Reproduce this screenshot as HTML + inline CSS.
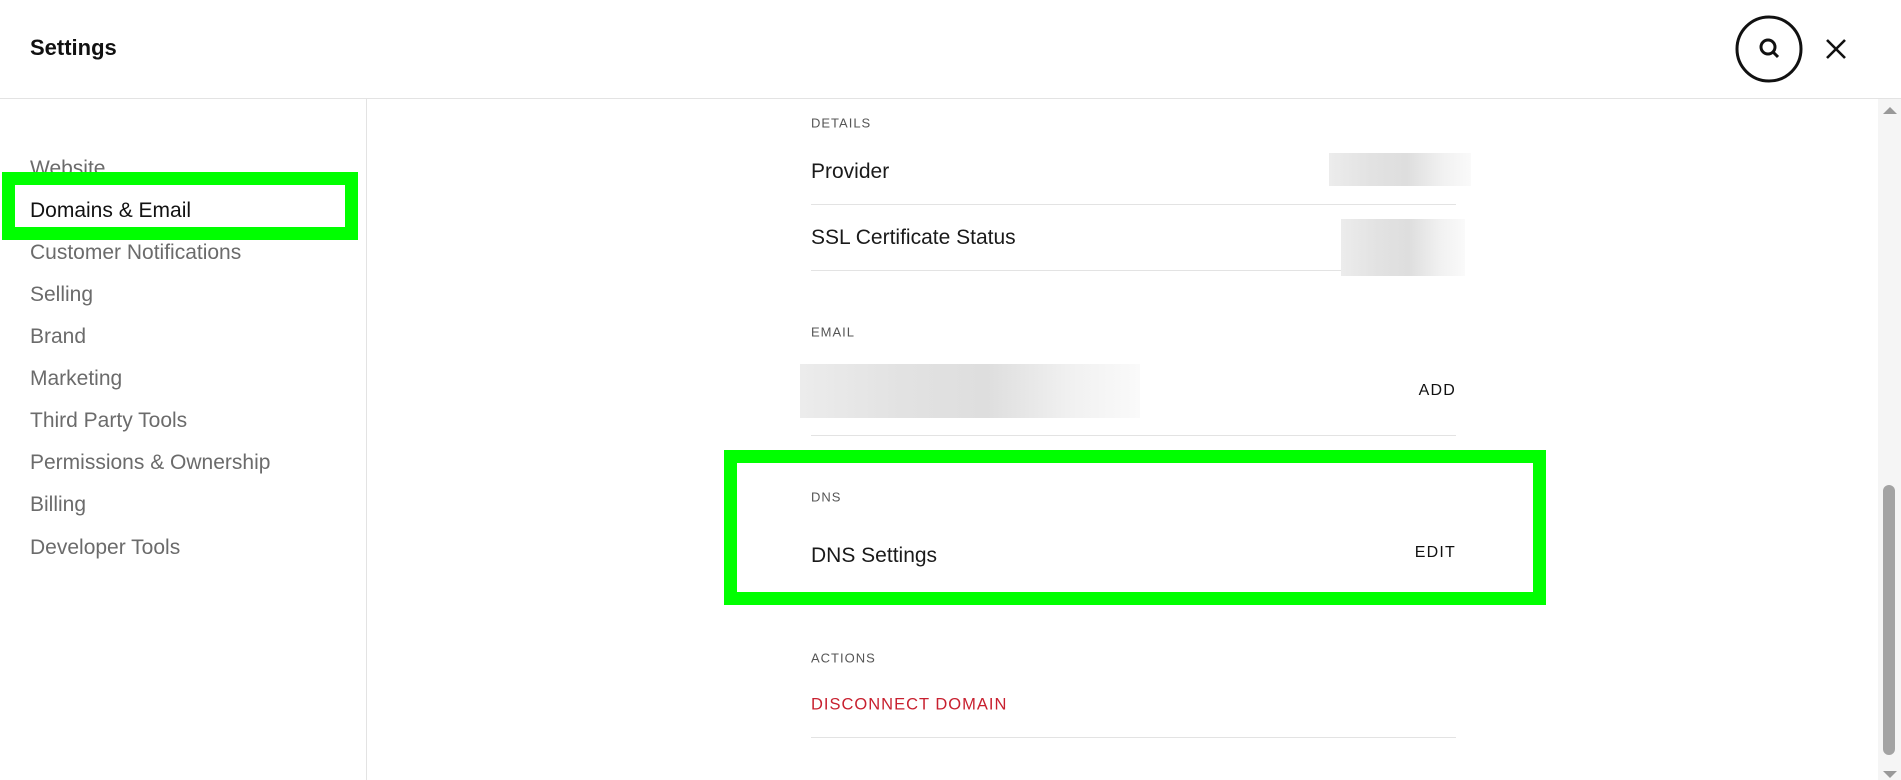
<!DOCTYPE html>
<html><head><meta charset="utf-8"><style>
*{margin:0;padding:0;box-sizing:border-box}
body{width:1901px;height:780px;overflow:hidden;background:#fff;font-family:"Liberation Sans",sans-serif;position:relative;color:#111}
.a{position:absolute;white-space:nowrap}
.nav{left:30px;font-size:21px;color:#6b6b6b;transform:translateY(-50%)}
.lbl{left:811px;font-size:13px;color:#555;letter-spacing:1px;transform:translateY(-50%)}
.row{left:811px;font-size:21px;color:#1a1a1a;transform:translateY(-50%)}
.btn{right:445px;font-size:16px;letter-spacing:1.2px;color:#111;transform:translateY(-50%)}
.hl{position:absolute;background:#e3e3e3}
.blur{position:absolute;background:linear-gradient(90deg,#ececec,#e2e2e2 30%,#dedede 55%,#f1f1f1 80%,#fafafa)}
</style></head><body>
<div class="a" style="left:30px;top:48px;transform:translateY(-50%);font-size:22px;font-weight:bold">Settings</div>
<svg class="a" style="left:1733px;top:13px" width="72" height="72"><circle cx="36" cy="36" r="32" fill="none" stroke="#111" stroke-width="3"/><circle cx="35" cy="34" r="7" fill="none" stroke="#111" stroke-width="3"/><line x1="40" y1="39" x2="45" y2="44" stroke="#111" stroke-width="3"/></svg>
<svg class="a" style="left:1825px;top:38px" width="22" height="22"><path d="M2 2L20 20M20 2L2 20" stroke="#111" stroke-width="2.6"/></svg>
<div class="hl" style="left:0;top:98px;width:1901px;height:1px"></div>
<div class="hl" style="left:366px;top:98px;width:1px;height:682px"></div>
<div class="a nav" style="top:169px">Website</div>
<div class="a" style="left:2px;top:172px;width:356px;height:68px;border:13px solid #00ff00;background:#fff"></div>
<div class="a nav" style="top:211px;color:#111">Domains &amp; Email</div>
<div class="a nav" style="top:253px">Customer Notifications</div>
<div class="a nav" style="top:295px">Selling</div>
<div class="a nav" style="top:337px">Brand</div>
<div class="a nav" style="top:379px">Marketing</div>
<div class="a nav" style="top:421px">Third Party Tools</div>
<div class="a nav" style="top:463px">Permissions &amp; Ownership</div>
<div class="a nav" style="top:505px">Billing</div>
<div class="a nav" style="top:548px">Developer Tools</div>

<div class="a lbl" style="top:123px">DETAILS</div>
<div class="a row" style="top:172px">Provider</div>
<div class="blur" style="left:1329px;top:153px;width:142px;height:33px"></div>
<div class="hl" style="left:811px;top:204px;width:645px;height:1px"></div>
<div class="a row" style="top:238px">SSL Certificate Status</div>
<div class="blur" style="left:1341px;top:219px;width:124px;height:57px"></div>
<div class="hl" style="left:811px;top:270px;width:530px;height:1px"></div>
<div class="a lbl" style="top:332px">EMAIL</div>
<div class="blur" style="left:800px;top:364px;width:340px;height:54px"></div>
<div class="a btn" style="top:391px">ADD</div>
<div class="hl" style="left:811px;top:435px;width:645px;height:1px"></div>
<div class="a" style="left:724px;top:450px;width:822px;height:155px;border:13px solid #00ff00"></div>
<div class="a lbl" style="top:497px">DNS</div>
<div class="a row" style="top:556px">DNS Settings</div>
<div class="a btn" style="top:553px">EDIT</div>
<div class="a lbl" style="top:658px">ACTIONS</div>
<div class="a" style="left:811px;top:705px;transform:translateY(-50%);font-size:16.5px;letter-spacing:1px;color:#c8202f">DISCONNECT DOMAIN</div>
<div class="hl" style="left:811px;top:737px;width:645px;height:1px"></div>

<div class="a" style="left:1878px;top:99px;width:23px;height:681px;background:#f5f5f5"></div>
<svg class="a" style="left:1882px;top:105px" width="16" height="10"><path d="M1 9L8 2L15 9Z" fill="#999"/></svg>
<div class="a" style="left:1883px;top:485px;width:12px;height:270px;background:#a3a3a3;border-radius:6px"></div>
<svg class="a" style="left:1882px;top:770px" width="16" height="10"><path d="M1 1L8 8L15 1Z" fill="#999"/></svg>
</body></html>
